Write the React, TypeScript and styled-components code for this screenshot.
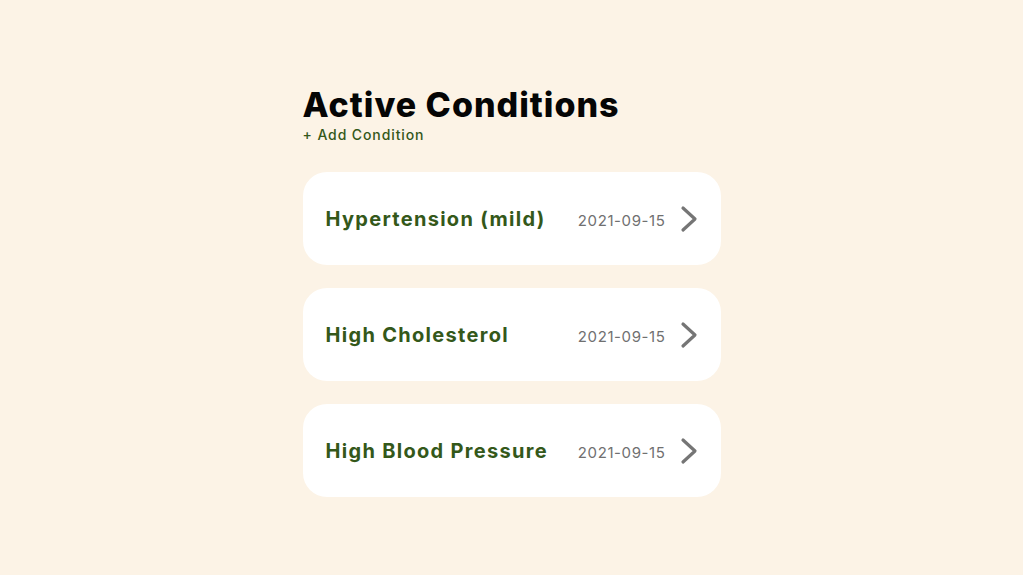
import styled, { createGlobalStyle } from "styled-components";

const GlobalStyle = createGlobalStyle`
  html, body {
    margin: 0;
    padding: 0;
    background: #fcf3e6;
    font-family: "Inter", "Liberation Sans", sans-serif;
  }
`;

const Page = styled.div`
  width: 1023px;
  height: 575px;
  background: #fcf3e6;
  display: flex;
  justify-content: center;
  box-sizing: border-box;
  padding-top: 83px;
`;

const Column = styled.div`
  width: 418px;
`;

const Title = styled.h1`
  margin: 0;
  font-size: 34px;
  font-weight: 800;
  line-height: 44px;
  color: #050505;
  letter-spacing: 1px;
`;

const AddLink = styled.button`
  display: block;
  margin: -1px 0 0;
  padding: 0;
  border: none;
  background: none;
  font-family: inherit;
  font-size: 14px;
  font-weight: 500;
  line-height: 18px;
  color: #34581a;
  letter-spacing: 0.9px;
  cursor: pointer;
`;

const List = styled.ul`
  list-style: none;
  margin: 28px 0 0;
  padding: 0;
  display: flex;
  flex-direction: column;
  gap: 23px;
`;

const Card = styled.li`
  height: 93px;
  background: #ffffff;
  border-radius: 24px;
  display: flex;
  align-items: center;
  padding: 0 22px 0 23px;
  box-sizing: border-box;
`;

const Name = styled.span`
  flex: 1;
  font-size: 20px;
  font-weight: 700;
  color: #34581a;
  letter-spacing: 1.3px;
`;

const DateText = styled.span`
  font-size: 15px;
  color: #707070;
  letter-spacing: 0.6px;
  margin-right: 13px;
  padding-top: 3px;
`;

const Chevron = () => (
  <svg width="20" height="28" viewBox="0 0 20 28">
    <polyline
      points="4,3 16,14 4,25"
      fill="none"
      stroke="#757575"
      strokeWidth="3.2"
      strokeLinecap="round"
      strokeLinejoin="round"
    />
  </svg>
);

const conditions = [
  { name: "Hypertension (mild)", date: "2021-09-15" },
  { name: "High Cholesterol", date: "2021-09-15" },
  { name: "High Blood Pressure", date: "2021-09-15" },
];

export default function App() {
  return (
    <>
      <GlobalStyle />
      <Page>
        <Column>
          <Title>Active Conditions</Title>
          <AddLink>+ Add Condition</AddLink>
          <List>
            {conditions.map((c) => (
              <Card key={c.name}>
                <Name>{c.name}</Name>
                <DateText>{c.date}</DateText>
                <Chevron />
              </Card>
            ))}
          </List>
        </Column>
      </Page>
    </>
  );
}
